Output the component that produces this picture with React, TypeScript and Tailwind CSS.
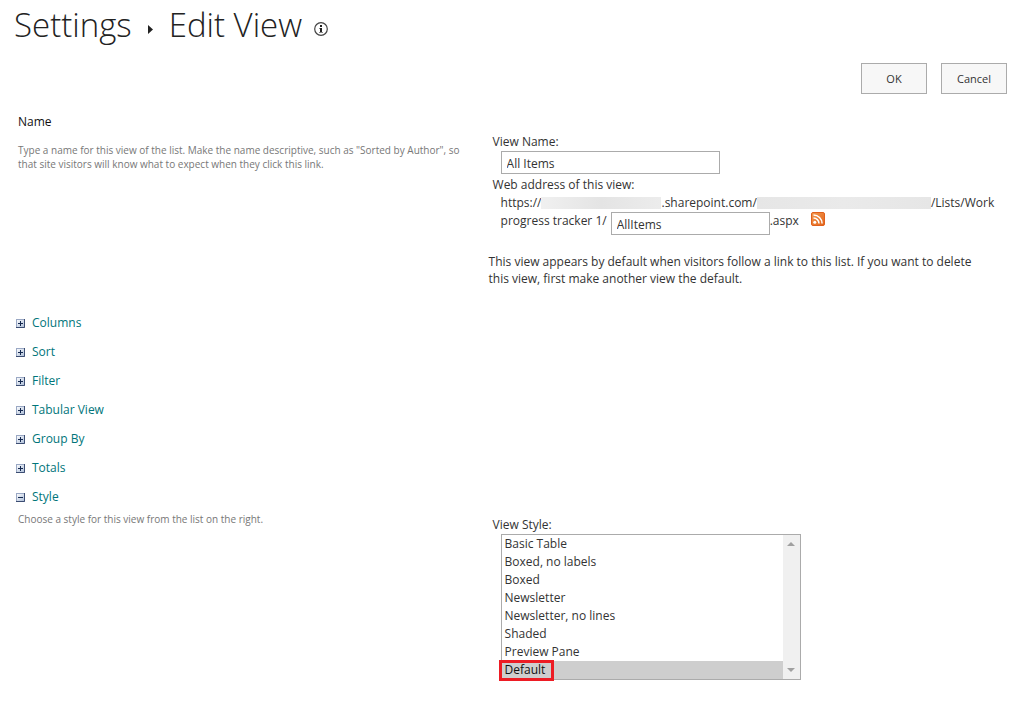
import React, { useState } from 'react';

const sections = ['Columns', 'Sort', 'Filter', 'Tabular View', 'Group By', 'Totals', 'Style'];

const viewStyles = [
  'Basic Table',
  'Boxed, no labels',
  'Boxed',
  'Newsletter',
  'Newsletter, no lines',
  'Shaded',
  'Preview Pane',
  'Default',
];

const InfoIcon = () => (
  <svg width="14" height="14" viewBox="0 0 14 14" aria-hidden="true">
    <circle cx="7" cy="7" r="6.3" fill="none" stroke="#444" strokeWidth="1.2" />
    <path d="M6 3h2v2H6zM6 6h2v5H6z" fill="#222" />
    <path d="M5 6h1v1H5zM5 10h4v1H5z" fill="#888" />
  </svg>
);

const RssIcon = () => (
  <svg width="14" height="14" viewBox="0 0 14 14" aria-hidden="true">
    <defs>
      <linearGradient id="rss" x1="0" y1="0" x2="1" y2="1">
        <stop offset="0" stopColor="#f39a50" />
        <stop offset="1" stopColor="#e2641a" />
      </linearGradient>
    </defs>
    <rect x="0.5" y="0.5" width="13" height="13" rx="1.5" fill="url(#rss)" stroke="#e0601c" />
    <circle cx="3.8" cy="10.3" r="1.5" fill="#fff" />
    <path d="M2.5 6a5.5 5.5 0 0 1 5.5 5.5M2.5 2.9a8.6 8.6 0 0 1 8.6 8.6" fill="none" stroke="#fff" strokeWidth="1.5" />
  </svg>
);

const ToggleIcon = ({ open }: { open: boolean }) => (
  <svg width="9" height="9" viewBox="0 0 9 9" aria-hidden="true">
    <defs>
      <linearGradient id="toggle" x1="0" y1="0" x2="1" y2="1">
        <stop offset="0" stopColor="#fff" />
        <stop offset="1" stopColor="#a9bbd6" />
      </linearGradient>
    </defs>
    <rect x="0.5" y="0.5" width="8" height="8" fill="url(#toggle)" stroke="#9aa8c4" />
    <path d="M8.5 0v8.5H0" fill="none" stroke="#3c4d72" />
    <path d={open ? 'M2 4.5h5' : 'M2 4.5h5M4.5 2v5'} stroke="#14284f" />
  </svg>
);

const App = () => {
  const [open, setOpen] = useState('Style');
  const [name, setName] = useState('All Items');
  const [address, setAddress] = useState('AllItems');
  const [viewStyle, setViewStyle] = useState('Default');

  return (
    <div className="bg-white pl-[10px] pr-[11px] pb-5 font-['Open_Sans',sans-serif] text-[12px] leading-[18px] text-[#333]">
      <h1 className="flex items-center pl-1 text-[33px] font-light leading-[50px] text-[#222]">
        <span>Settings</span>
        <svg className="mx-4 mt-2" width="5" height="9" viewBox="0 0 5 9" aria-hidden="true">
          <path d="M0 0l5 4.5L0 9z" fill="#222" />
        </svg>
        <span>Edit View</span>
        <button type="button" aria-label="Information" className="ml-3 mt-2">
          <InfoIcon />
        </button>
      </h1>

      {/* Actions */}
      <div className="mt-[13px] flex justify-end gap-[14px] text-[11px]">
        <button type="button" className="h-[31px] w-[66px] border border-[#ababab] bg-[#f7f7f7]">OK</button>
        <button type="button" className="h-[31px] w-[66px] border border-[#ababab] bg-[#f7f7f7]">Cancel</button>
      </div>

      {/* Name and address */}
      <div className="mt-[19px] grid grid-cols-[48%_1fr]">
        <div className="pl-2 pr-5">
          <h2 className="text-[#111]">Name</h2>
          <p className="mt-3 text-[10px] leading-[14px] text-[#777]">
            Type a name for this view of the list. Make the name descriptive, such as "Sorted by Author", so
            that site visitors will know what to expect when they click this link.
          </p>
        </div>
        <div className="pt-5">
          <div className="pl-1">
            <label htmlFor="view-name" className="block">View Name:</label>
            <input
              id="view-name"
              className="ml-2 block h-[23px] w-[219px] border border-[#ababab] px-[5px] pt-[2px]"
              value={name}
              onChange={(e) => setName(e.target.value)}
            />
            <label htmlFor="view-address" className="mt-[2px] block">Web address of this view:</label>
            <div className="flex items-center pl-2">
              <span>https://</span>
              <span className="h-3 w-[120px] bg-linear-to-r from-[#f0f0f0] via-[#e4e4e4] to-[#ececec]" />
              <span>.sharepoint.com/</span>
              <span className="h-3 w-[174px] bg-linear-to-r from-[#e6e6e6] via-[#eaeaea] to-[#e6e6e6]" />
              <span>/Lists/Work</span>
            </div>
            <div className="flex items-start pl-2">
              <span>progress tracker 1/</span>
              <input
                id="view-address"
                className="ml-1 h-[23px] w-[159px] border border-[#ababab] px-[5px] pt-[2px]"
                value={address}
                onChange={(e) => setAddress(e.target.value)}
              />
              <span>.aspx</span>
              <a href="#rss" aria-label="RSS feed" className="ml-3">
                <RssIcon />
              </a>
            </div>
          </div>
          <p className="mt-[18px] pr-6 leading-[17px]">
            This view appears by default when visitors follow a link to this list. If you want to delete
            this view, first make another view the default.
          </p>
        </div>
      </div>

      {/* Collapsible sections */}
      <ul className="mt-[27px] flex flex-col items-start gap-[11px] pl-[6px] text-[#00757a]">
        {sections.map((section) => (
          <li key={section}>
            <a
              href={`#${section}`}
              className="flex items-center gap-[7px]"
              onClick={() => setOpen(open === section ? '' : section)}
            >
              <ToggleIcon open={open === section} />
              {section}
            </a>
          </li>
        ))}
      </ul>

      {open === 'Style' && (
        <div className="mt-[6px] grid grid-cols-[48%_1fr]">
          <p className="pl-2 text-[10px] leading-[14px] text-[#777]">
            Choose a style for this view from the list on the right.
          </p>
          <div className="pl-1 pt-1">
            <label htmlFor="view-style" className="block">View Style:</label>
            <div className="relative ml-2 flex h-[146px] w-[300px] border border-[#ababab]">
              <select
                id="view-style"
                size={8}
                className="h-[144px] flex-1 overflow-hidden outline-none [scrollbar-width:none]"
                value={viewStyle}
                onChange={(e) => setViewStyle(e.target.value)}
              >
                {viewStyles.map((style) => (
                  <option key={style} className="h-[18px] min-h-0 px-[3px] py-0 leading-[18px]">{style}</option>
                ))}
              </select>
              <div className="flex w-[17px] flex-col items-center justify-between bg-[#f0f0f0] py-[7px]">
                <svg width="8" height="4" viewBox="0 0 8 4" aria-hidden="true">
                  <path d="M0 4l4-4 4 4z" fill="#a0a0a0" />
                </svg>
                <svg width="8" height="4" viewBox="0 0 8 4" aria-hidden="true">
                  <path d="M0 0h8L4 4z" fill="#a0a0a0" />
                </svg>
              </div>
              <div className="pointer-events-none absolute -bottom-[2px] -left-[3px] h-[21px] w-[55px] border-3 border-[#ed1c24]" />
            </div>
          </div>
        </div>
      )}
    </div>
  );
};

export default App;
